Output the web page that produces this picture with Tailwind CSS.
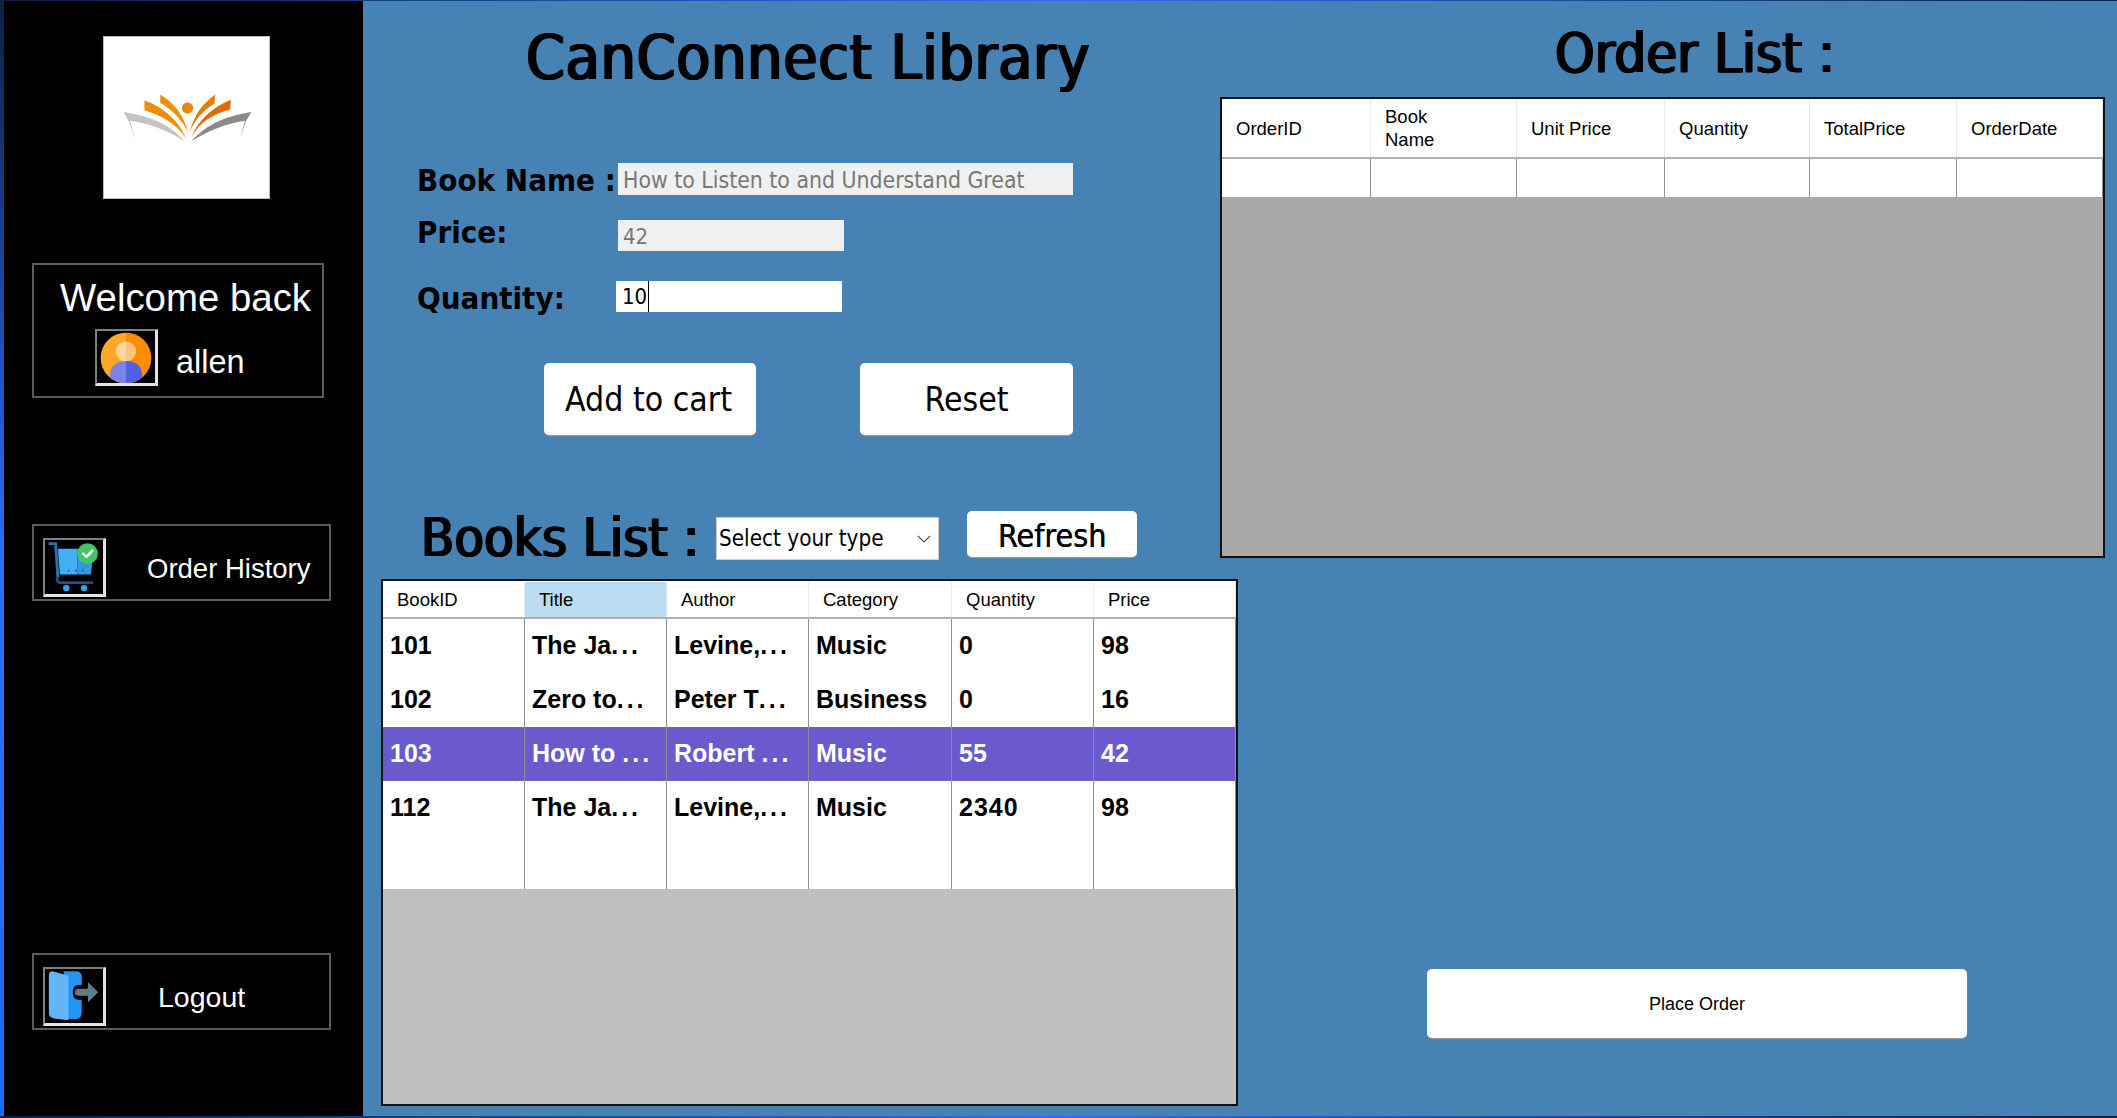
<!DOCTYPE html>
<html lang="en">
<head>
    <meta charset="UTF-8">
    <meta name="viewport" content="width=device-width, initial-scale=1.0">
    <title>CanConnect Library</title>
    <script src="https://cdn.jsdelivr.net/npm/@tailwindcss/browser@4"></script>
</head>
<body class="h-[1118px] w-[2117px] overflow-hidden bg-[#1a4be0] font-['Liberation_Sans',sans-serif]">
    <div class="h-[1px] bg-linear-to-r from-[#0d2144] via-[#2f6dff] to-[#0d2144]"></div>
    <div class="flex h-[1115px]">
        <div class="w-[4px] bg-linear-to-b from-[#0d2144] via-[#2f6dff] to-[#1a6cff]"></div>

        <!-- Sidebar -->
        <aside class="w-[359px] shrink-0 bg-black pl-[28px] text-white">
            <div class="ml-[71px] mt-[35px] h-[163px] w-[167px] border border-[#bbb] bg-white">
                <svg viewBox="310 107 500 490" class="h-full w-full">
                    <path fill="#c4c4c4" d="M368 335C440 345 510 370 555 425C510 395 450 370 388 362L405 422L385 365Z"/>
                    <path fill="#8a8a8a" d="M757 335C690 345 620 370 575 425C620 395 680 370 738 362L722 418L740 365Z"/>
                    <path fill="#ee8f0c" d="M432 300L432 330C480 345 530 370 558 415C540 365 490 320 432 300Z"/>
                    <path fill="#ee8f0c" d="M480 282L480 308C515 325 545 360 565 395C550 345 525 310 480 282Z"/>
                    <path fill="#e57d05" d="M647 282L645 310C610 330 585 360 570 395C585 340 610 310 647 282Z"/>
                    <path fill="#e06c00" d="M695 298L693 328C645 340 600 365 575 412C595 360 640 320 695 298Z"/>
                    <circle cx="563" cy="323" r="17" fill="#e8860c"/>
                </svg>
            </div>

            <div class="mt-[64px] h-[135px] w-[292px] border-2 border-[#5c5c5c]">
                <div class="ml-[26px] mt-[11px] text-[38.4px] leading-[44px]">Welcome back</div>
                <div class="mt-[9px] flex items-center">
                    <div class="ml-[61px] h-[57px] w-[63px] border-2 border-b-[3px] border-r-[3px] border-t-[#808080] border-l-[#808080] border-r-[#e4e4e4] border-b-[#e4e4e4]">
                        <svg viewBox="292 990 172 160" class="h-full w-full">
                            <path fill="#ffa726" d="M378 995a78 78 0 0 0 0 156Z"/>
                            <path fill="#fb8c00" d="M378 995a78 78 0 0 1 0 156Z"/>
                            <path fill="#ffd5a0" d="M378 1022a31 31 0 0 0 0 62Z"/>
                            <path fill="#ffc27a" d="M378 1022a31 31 0 0 1 0 62Z"/>
                            <path fill="#7b83eb" d="M378 1082C345 1082 328 1100 328 1132C342 1144 360 1150 378 1150Z"/>
                            <path fill="#4f5fe6" d="M378 1082C411 1082 428 1100 428 1132C414 1144 396 1150 378 1150Z"/>
                        </svg>
                    </div>
                    <span class="ml-[18px] mt-[9px] text-[32.5px] leading-none">allen</span>
                </div>
            </div>

            <div class="mt-[126px] flex h-[77px] w-[299px] items-center border-2 border-[#5c5c5c]">
                <div class="ml-[9px] mt-[10px] h-[59px] w-[63px] shrink-0 border-2 border-b-[3px] border-r-[3px] border-t-[#808080] border-l-[#808080] border-r-[#e4e4e4] border-b-[#e4e4e4]">
                    <svg viewBox="132 119 180 165" class="h-full w-full">
                        <path fill="none" stroke="#2f6fb0" stroke-width="9" d="M143 129H165L172 235"/>
                        <path fill="#40b0f5" d="M172 145H232V225H178Z"/>
                        <path fill="#3498e0" d="M232 145H282L275 225H232Z"/>
                        <circle cx="205" cy="213" r="3.5" fill="#1f6fb0"/>
                        <circle cx="228" cy="213" r="3.5" fill="#1f6fb0"/>
                        <circle cx="249" cy="213" r="3.5" fill="#1f6fb0"/>
                        <path fill="none" stroke="#1f4e8c" stroke-width="9" stroke-linecap="round" d="M170 237Q168 250 180 250H278"/>
                        <circle cx="198" cy="267" r="10" fill="#29a9ea"/>
                        <circle cx="253" cy="267" r="10" fill="#29a9ea"/>
                        <circle cx="264" cy="160" r="32" fill="#43c465"/>
                        <path fill="none" stroke="#fff" stroke-width="8" stroke-linecap="round" stroke-linejoin="round" d="M250 160L261 170L279 151"/>
                    </svg>
                </div>
                <span class="ml-[41px] mt-[12px] text-[27.5px] leading-none">Order History</span>
            </div>

            <div class="mt-[352px] flex h-[77px] w-[299px] items-center border-2 border-[#5c5c5c]">
                <div class="ml-[9px] mt-[10px] h-[59px] w-[63px] shrink-0 border-2 border-b-[3px] border-r-[3px] border-t-[#808080] border-l-[#808080] border-r-[#e4e4e4] border-b-[#e4e4e4]">
                    <svg viewBox="132 116 180 165" class="h-full w-full">
                        <path fill="#2196f3" d="M190 122H228Q246 122 246 140V164H236Q218 164 218 187Q218 210 236 210H246V250Q246 270 228 270H190Z"/>
                        <path fill="#64b5f6" d="M155 122L205 136V274L160 268Q144 266 144 250V134Q144 122 155 122Z"/>
                        <path fill="#607d8b" d="M236 176H265V155L297 187L265 219V198H236Q225 198 225 187Q225 176 236 176Z"/>
                    </svg>
                </div>
                <span class="ml-[52px] mt-[11px] text-[28.5px] leading-none">Logout</span>
            </div>
        </aside>

        <!-- Main area -->
        <main class="flex flex-1 bg-[#4682b4] text-black">
            <div class="w-[875px] shrink-0">
                <h1 class="ml-[163px] flex h-[114px] items-center text-[62px] font-normal leading-none tracking-[0.7px] whitespace-nowrap font-['DejaVu_Sans',sans-serif] [font-stretch:condensed] [text-shadow:1.3px_0_0_#000,-1.3px_0_0_#000]">CanConnect Library</h1>

                <div class="ml-[54px] mt-[48px] flex h-[32px] items-center font-['DejaVu_Sans',sans-serif] [font-stretch:condensed]">
                    <label class="mt-[2px] w-[201px] text-[31px] font-bold whitespace-nowrap">Book Name :</label>
                    <div class="flex h-full w-[455px] items-center bg-[#f0f0f0] pl-[5px] pt-[2px] text-[22.8px] text-[#777] whitespace-nowrap">How to Listen to and Understand Great</div>
                </div>
                <div class="ml-[54px] mt-[25px] flex h-[31px] items-center font-['DejaVu_Sans',sans-serif] [font-stretch:condensed]">
                    <label class="mb-[6px] w-[201px] text-[31px] font-bold">Price:</label>
                    <div class="flex h-full w-[226px] items-center bg-[#f0f0f0] pl-[5px] pt-[2px] text-[22px] text-[#777]">42</div>
                </div>
                <div class="ml-[54px] mt-[30px] flex h-[31px] items-center font-['DejaVu_Sans',sans-serif] [font-stretch:condensed]">
                    <label class="mt-[3px] w-[199px] text-[31px] font-bold">Quantity:</label>
                    <div class="flex h-full w-[226px] items-center bg-white pl-[6px] text-[22px]">10<span class="ml-[1px] h-full w-[1px] bg-black"></span></div>
                </div>

                <div class="ml-[181px] mt-[51px] flex gap-[104px] font-['DejaVu_Sans',sans-serif] [font-stretch:condensed] [text-shadow:0.4px_0_0_#000]">
                    <button class="h-[72px] w-[212px] rounded-[5px] bg-white pr-[3px] pt-[2px] text-[33.5px] shadow-[0_1px_1px_#999]">Add to cart</button>
                    <button class="h-[72px] w-[213px] rounded-[5px] bg-white pt-[2px] text-[33.5px] shadow-[0_1px_1px_#999]">Reset</button>
                </div>

                <div class="mt-[76px] flex h-[49px] items-start font-['DejaVu_Sans',sans-serif] [font-stretch:condensed]">
                    <h2 class="ml-[58px] mt-[1px] w-[295px] text-[54px] font-normal leading-[52px] whitespace-nowrap [text-shadow:1.2px_0_0_#000,-1.2px_0_0_#000]">Books List :</h2>
                    <div class="mt-[6px] flex h-[43px] w-[223px] items-center justify-between border border-[#ccc] bg-white pl-[2px] pr-[7px] text-[22.3px] whitespace-nowrap">
                        Select your type
                        <svg viewBox="0 0 14 8" class="h-[8px] w-[14px]"><path fill="none" stroke="#555" stroke-width="1.2" d="M1 1L7 7L13 1"/></svg>
                    </div>
                    <button class="ml-[28px] h-[46px] w-[170px] rounded-[5px] bg-white pt-[4px] text-[32px] leading-none shadow-[0_1px_1px_#999] [text-shadow:0.4px_0_0_#000]">Refresh</button>
                </div>

                <!-- Books grid -->
                <div class="ml-[18px] mt-[19px] h-[527px] w-[857px] border-2 border-[#111] bg-[#bfbfbf]">
                    <div class="grid h-[38px] grid-cols-[142px_142px_142px_143px_142px_142px] border-b-2 border-[#b0b0b0] bg-white pt-[1px] text-[18.5px] [&>div]:flex [&>div]:items-center [&>div]:border-r [&>div]:border-[#e8e8e8] [&>div]:pl-[14px]">
                        <div>BookID</div>
                        <div class="bg-[#bcdcf4]">Title</div>
                        <div>Author</div>
                        <div>Category</div>
                        <div>Quantity</div>
                        <div>Price</div>
                    </div>
                    <div class="grid auto-rows-[54px] grid-cols-[142px_142px_142px_143px_142px_142px] bg-white text-[25px] font-bold [&>div]:flex [&>div]:items-center [&>div]:border-r [&>div]:border-[#8f8f8f] [&>div]:pl-[7px] [&>div]:whitespace-nowrap [&_span]:tracking-[3px]">
                        <div>101</div><div>The Ja<span>...</span></div><div>Levine,<span>...</span></div><div>Music</div><div>0</div><div>98</div>
                        <div>102</div><div>Zero to<span>...</span></div><div>Peter T<span>...</span></div><div>Business</div><div>0</div><div>16</div>
                        <div class="bg-[#6a5acd] text-white">103</div><div class="bg-[#6a5acd] text-white">How to&nbsp;<span>...</span></div><div class="bg-[#6a5acd] text-white">Robert&nbsp;<span>...</span></div><div class="bg-[#6a5acd] text-white">Music</div><div class="bg-[#6a5acd] text-white">55</div><div class="bg-[#6a5acd] text-white">42</div>
                        <div>112</div><div>The Ja<span>...</span></div><div>Levine,<span>...</span></div><div>Music</div><div class="tracking-[1px]">2340</div><div>98</div>
                        <div></div><div></div><div></div><div></div><div></div><div></div>
                    </div>
                </div>
            </div>

            <div class="ml-[-18px] w-[885px] shrink-0">
                <h2 class="flex h-[96px] items-center justify-center pl-[65px] pt-[7px] text-[56px] font-normal leading-none font-['DejaVu_Sans',sans-serif] [font-stretch:condensed] [text-shadow:1.2px_0_0_#000,-1.2px_0_0_#000]">Order List :</h2>

                <!-- Orders grid -->
                <div class="h-[461px] w-[885px] border-2 border-[#111] bg-[#a9a9a9]">
                    <div class="grid h-[60px] grid-cols-[149px_146px_148px_145px_147px_146px] border-b-2 border-[#b0b0b0] bg-white text-[18.5px] leading-[23px] [&>div]:flex [&>div]:items-center [&>div]:border-r [&>div]:border-[#e8e8e8] [&>div]:pl-[14px]">
                        <div>OrderID</div>
                        <div>Book<br>Name</div>
                        <div>Unit Price</div>
                        <div>Quantity</div>
                        <div>TotalPrice</div>
                        <div>OrderDate</div>
                    </div>
                    <div class="grid h-[38px] grid-cols-[149px_146px_148px_145px_147px_146px] bg-white [&>div]:border-r [&>div]:border-[#8f8f8f]">
                        <div></div><div></div><div></div><div></div><div></div><div></div>
                    </div>
                </div>

                <button class="ml-[207px] mt-[411px] h-[69px] w-[540px] rounded-[5px] bg-white pt-[1px] text-[18px] shadow-[0_1px_1px_#999]">Place Order</button>
            </div>
        </main>
    </div>
    <div class="h-[2px] bg-linear-to-r from-[#0d2144] via-[#2f6dff] to-[#0d2144]"></div>
</body>
</html>
